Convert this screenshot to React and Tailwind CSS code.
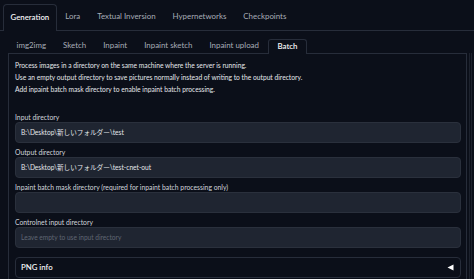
import React from 'react';

const topTabs = ['Generation', 'Lora', 'Textual Inversion', 'Hypernetworks', 'Checkpoints'];
const subTabs = ['img2img', 'Sketch', 'Inpaint', 'Inpaint sketch', 'Inpaint upload', 'Batch'];

const fields = [
  { label: 'Input directory', value: 'B:\\Desktop\\新しいフォルダー\\test' },
  { label: 'Output directory', value: 'B:\\Desktop\\新しいフォルダー\\test-cnet-out' },
  { label: 'Inpaint batch mask directory (required for inpaint batch processing only)', value: '' },
  { label: 'Controlnet input directory', value: '', placeholder: 'Leave empty to use input directory' },
];

const font = { fontFamily: 'Lato, "Noto Sans CJK JP", sans-serif' };

export default function App() {
  return (
    <div className="h-[279px] w-[474px] overflow-hidden bg-[#0b0f19] text-[#e5e7eb]" style={font}>
      {/* top tabs */}
      <div className="flex h-[31px] items-end border-b border-[#272d3a] pl-[3px] pt-[5px]">
        {topTabs.map((t, i) =>
          i === 0 ? (
            <div
              key={t}
              className="relative -mb-px flex h-[27px] items-center rounded-t-[4px] border border-b-0 border-[#272d3a] bg-[#0b0f19] px-[6.5px] text-[7.8px] font-semibold text-[#f3f4f6]"
            >
              {t}
            </div>
          ) : (
            <div key={t} className="flex h-[27px] items-center px-[8.5px] text-[7.9px] text-[#a8adb7]">
              {t}
            </div>
          )
        )}
      </div>

      <div className="flex">
        <div className="w-[8px] shrink-0" />
        <div className="w-[459px]">
          {/* sub tabs */}
          <div className="flex h-[22px] items-end pl-[0px]">
            {subTabs.map((t) =>
              t === 'Batch' ? (
                <div
                  key={t}
                  className="relative -mb-px ml-[1px] flex h-[15px] items-center rounded-t-[3px] border border-b-0 border-[#272d3a] bg-[#0b0f19] px-[8px] text-[7.9px] font-semibold text-[#f3f4f6]"
                >
                  {t}
                </div>
              ) : (
                <div key={t} className="flex h-[15px] items-center px-[8.5px] text-[7.9px] text-[#a8adb7]">
                  {t}
                </div>
              )
            )}
          </div>

          {/* panel */}
          <div className="h-[240px] border-l border-r border-t border-[#272d3a] px-[6px] pt-[6px]">
            <div className="text-[6.7px] leading-[11.8px] text-[#e5e7eb]">
              <p>Process images in a directory on the same machine where the server is running.</p>
              <p>Use an empty output directory to save pictures normally instead of writing to the output directory.</p>
              <p>Add inpaint batch mask directory to enable inpaint batch processing.</p>
            </div>

            <div className="mt-[17px] flex flex-col gap-[4px]">
              {fields.map((f) => (
                <div key={f.label}>
                  <div className="flex h-[10px] items-center text-[6.8px] text-[#d1d5db]">{f.label}</div>
                  <div className="flex h-[21px] w-[446px] items-center rounded-[4px] border border-[#2a303c] bg-[#1f2531] px-[5px] text-[6.6px]">
                    {f.value ? (
                      <span className="text-[#e5e7eb]">{f.value}</span>
                    ) : (
                      <span className="text-[#5f6673]">{f.placeholder || ''}</span>
                    )}
                  </div>
                </div>
              ))}
            </div>

            <div className="mt-[9px] flex h-[21px] w-[446px] items-center justify-between rounded-[4px] border border-[#272d3a] bg-[#0b0f19] pl-[5px] pr-[6px]">
              <span className="text-[7.8px] font-semibold text-[#f3f4f6]">PNG info</span>
              <svg width="7" height="7" viewBox="0 0 7 7">
                <polygon points="6.5,0.5 6.5,6.5 0.5,3.5" fill="#ffffff" />
              </svg>
            </div>
          </div>
        </div>
        <div className="ml-[2px] mt-[22px] h-[240px] w-[3px] border-l border-r border-[#1d222d]" />
      </div>
    </div>
  );
}
